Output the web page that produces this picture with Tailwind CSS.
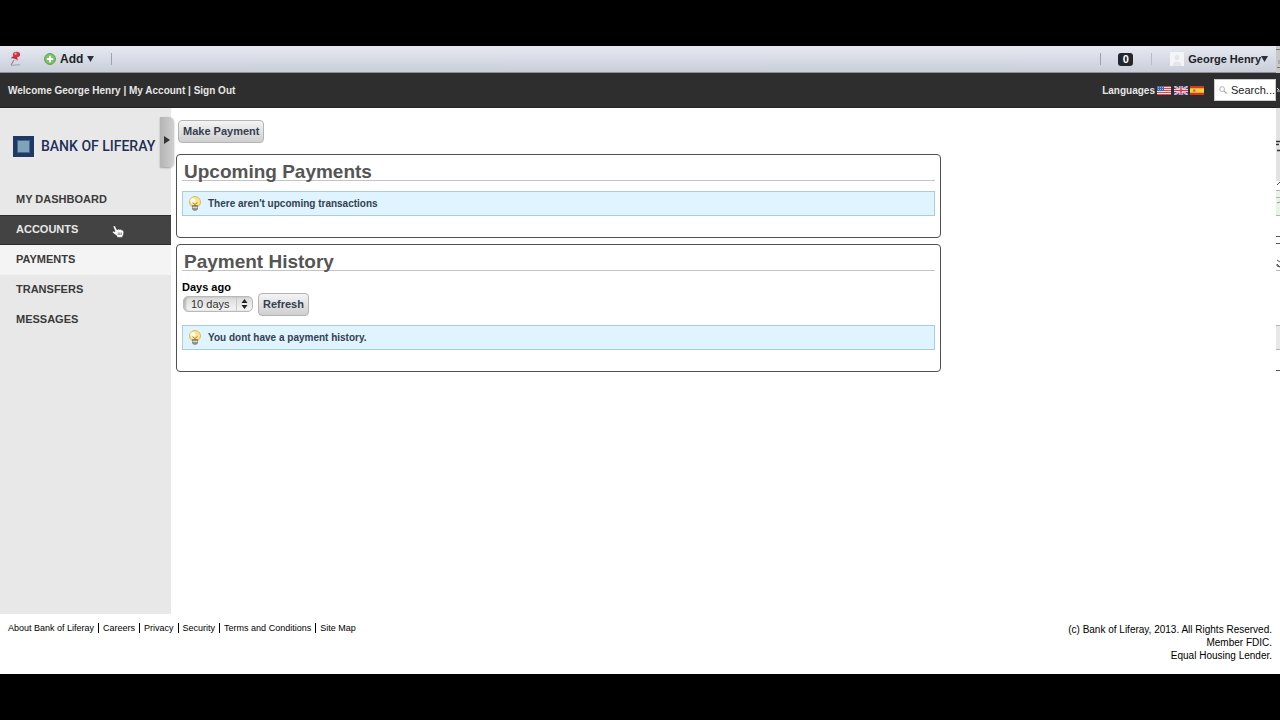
<!DOCTYPE html>
<html lang="en">
<head>
    <meta charset="UTF-8">
    <meta name="viewport" content="width=device-width, initial-scale=1.0">
    <title>Bank of Liferay - Payments</title>
    <script src="https://cdn.jsdelivr.net/npm/@tailwindcss/browser@4"></script>
</head>
<body class="bg-black min-h-screen flex flex-col py-[46px] font-['Liberation_Sans',Arial,sans-serif] text-[11px] text-black">
    <!-- Shared bulb icon for the info messages -->
    <svg class="hidden">
        <symbol id="bulb" viewBox="0 0 14 15">
            <circle cx="7" cy="6" r="5.500" fill="#fbe38c" stroke="#d6b35c" stroke-width=".9"/>
            <circle cx="5" cy="4.500" r="2.500" fill="#fffbe6"/>
            <path d="M4.500 6.500L7 8.500l2.500-2M7 8.500V11" fill="none" stroke="#b8841c" stroke-width="1"/>
            <path d="M4.500 9.500h5V13l-1 1.200h-3l-1-1.200z" fill="#9a9a90" stroke="#5e5e58" stroke-width=".6"/>
            <path d="M4.500 11.500h5" stroke="#e4e4dc" stroke-width=".8"/>
        </symbol>
    </svg>

    <div class="relative flex-1 flex flex-col bg-white overflow-hidden">
        <!-- Dockbar -->
        <header class="h-[27px] flex items-center justify-between pl-2 pr-3 bg-linear-to-b from-[#e6e9f1] to-[#c9ced9] border-b border-[#8b8f98] text-[11px] font-bold text-[#1c1f26]">
            <div class="flex items-center">
                <button type="button" aria-label="Pin the dockbar" class="w-4 h-4">
                    <svg viewBox="0 0 16 16" class="w-4 h-4">
                        <path d="M3 14.500l9-1" stroke="#9a9ca4" stroke-width="1.500" opacity=".6"/>
                        <path d="M6 9l-3 5" stroke="#8a8d96" stroke-width="1.200"/>
                        <path d="M3 7.500c1.500-.8 5 .2 6.500 2 .4-.8.200-1.800-.6-2.500L10.500 5 6 3 5 5.500C4 5.700 3.200 6.400 3 7.500z" fill="#c4303f"/>
                        <ellipse cx="8.500" cy="3.500" rx="3.600" ry="2.800" fill="#cf3345"/>
                        <circle cx="7.500" cy="2.800" r="1.200" fill="#f59aa3"/>
                    </svg>
                </button>
                <button type="button" class="flex items-center ml-5 text-[12px]">
                    <svg viewBox="0 0 12 12" class="w-3 h-3 mr-1">
                        <circle cx="6" cy="6" r="5.400" fill="#7cc464" stroke="#5c9a4a" stroke-width="1"/>
                        <path d="M6 2.800v6.400M2.800 6h6.400" stroke="#fff" stroke-width="2"/>
                    </svg>
                    Add
                    <svg viewBox="0 0 8 7" class="w-[7px] h-1.5 ml-1"><path d="M0 0h8L4 7z" fill="#2c303a"/></svg>
                </button>
                <span class="ml-[17px] w-px h-3 bg-[#9ca1ae]"></span>
            </div>
            <div class="flex items-center">
                <span class="w-px h-3 bg-[#9ca1ae]"></span>
                <button type="button" class="ml-[17px] w-[15px] h-[13px] rounded-[3px] bg-[#23262e] text-white text-[11px] leading-[13px]">0</button>
                <span class="ml-[18px] w-px h-3 bg-[#b8bcc8]"></span>
                <button type="button" class="ml-[18px] flex items-center">
                    <svg viewBox="0 0 14 14" class="w-[14px] h-[14px] mr-1">
                        <path d="M0 0h14v14H0z" fill="#f4f5f7"/>
                        <circle cx="7" cy="5.500" r="2.500" fill="#e4e6ea"/>
                        <path d="M2.500 14c0-6 9-6 9 0z" fill="#e4e6ea"/>
                    </svg>
                    George Henry
                    <svg viewBox="0 0 7 6" class="w-[7px] h-1.5"><path d="M0 0h7L3.500 6z" fill="#2c303a"/></svg>
                </button>
            </div>
        </header>

        <!-- Welcome bar -->
        <div class="h-[35px] flex items-center justify-between pl-2 pr-1 bg-[#2e2e2e] border-b border-[#222] text-[10px] text-[#e6e6e6] font-bold">
            <p>Welcome George Henry | <a href="#">My Account</a> | <a href="#">Sign Out</a></p>
            <div class="flex items-center">
                <span class="mr-0.5">Languages</span>
                <a href="#" aria-label="English (United States)" class="mr-[3px]">
                    <svg viewBox="0 0 14 9" class="w-[14px] h-[9px]">
                        <path d="M0 0h14v9H0z" fill="#f3dfe0"/>
                        <path d="M0 .5h14M0 2.500h14M0 4.500h14M0 6.500h14M0 8.500h14" stroke="#cf4a50" stroke-width="1"/>
                        <path d="M0 0h7v5H0z" fill="#4668ac"/>
                        <path d="M1 1.500h5M1 3.500h5" stroke="#c7d3ea" stroke-width=".7" stroke-dasharray="1 1"/>
                    </svg>
                </a>
                <a href="#" aria-label="English (United Kingdom)" class="mr-0.5">
                    <svg viewBox="0 0 14 9" class="w-[14px] h-[9px]">
                        <path d="M0 0h14v9H0z" fill="#3a4f98"/>
                        <path d="M0 0l14 9M14 0L0 9" stroke="#f0e6ee" stroke-width="1.800"/>
                        <path d="M0 0l14 9M14 0L0 9" stroke="#cf5060" stroke-width=".6"/>
                        <path d="M7 0v9M0 4.500h14" stroke="#fff" stroke-width="3"/>
                        <path d="M7 0v9M0 4.500h14" stroke="#cc3344" stroke-width="1.400"/>
                    </svg>
                </a>
                <a href="#" aria-label="Spanish">
                    <svg viewBox="0 0 14 9" class="w-[14px] h-[9px]">
                        <path d="M0 0h14v9H0z" fill="#f6cf32"/>
                        <path d="M0 0h14v2.300H0zM0 6.700h14V9H0z" fill="#d8352b"/>
                        <path d="M3 3.500h2.500v2.200H3z" fill="#b87430"/>
                    </svg>
                </a>
                <label class="ml-[10px] flex items-center w-[62px] h-[22px] pl-1 bg-white border border-[#ccc]">
                    <svg viewBox="0 0 9 9" class="w-2 h-2 shrink-0 mr-1" fill="none" stroke="#a8a8a8">
                        <circle cx="3.500" cy="3.500" r="2.700"/>
                        <path d="M5.500 5.500l3 3" stroke-width="1.400"/>
                    </svg>
                    <input type="text" aria-label="Search" value="Search..." class="w-full min-w-0 font-normal text-[11px] text-[#222] outline-none">
                </label>
            </div>
        </div>

        <div class="flex-1 flex">
            <!-- Sidebar -->
            <aside class="relative w-[171px] shrink-0 bg-[#e8e8e8]">
                <a href="#" class="h-[77px] flex items-center pl-[13px] font-[Roboto,'Liberation_Sans',sans-serif] text-[14px] font-medium text-[#1f2f57] whitespace-nowrap">
                    <svg viewBox="0 0 21 21" class="w-[21px] h-[21px] mr-[7px]">
                        <path d="M0 0h21v21H0z" fill="#1f3864"/>
                        <path d="M4.500 4.500h12v12h-12z" fill="#7fa3ba" stroke="#456888"/>
                    </svg>
                    BANK OF LIFERAY
                </a>
                <nav class="font-bold text-[#3a3a3a]">
                    <a href="#" class="flex items-center h-[30px] pl-4 pb-0.5">MY DASHBOARD</a>
                    <a href="#" class="relative flex items-center h-[30px] pl-4 pb-0.5 bg-[#434343] border-y border-[#2c2c2c] text-[#e8e8e8]">
                        ACCOUNTS
                        <!-- Hand pointer -->
                        <svg viewBox="0 0 12 13" class="absolute left-[112px] top-[9px] w-3 h-[13px]">
                            <path d="M1 1.200c.8-1 1.900-.5 2.400.3L5 4.800l1.200-.8 1.300.6 1.300-.4 1.100.9 1.300.2.600 1.600-.3 3-.9 1.200v1.300H5v-1.200L2.300 9 .3 7.200l.8-1.300 2 .8z" fill="#fff" stroke="#222" stroke-width=".5"/>
                            <path d="M6.200 7.500v2.500M7.800 7.500v2.500M9.300 7.500v2.500" stroke="#333" stroke-width=".6"/>
                        </svg>
                    </a>
                    <a href="#" class="flex items-center h-[30px] pl-4 pb-0.5 bg-[#f4f4f4]">PAYMENTS</a>
                    <a href="#" class="flex items-center h-[30px] pl-4 pb-0.5">TRANSFERS</a>
                    <a href="#" class="flex items-center h-[30px] pl-4 pb-0.5">MESSAGES</a>
                </nav>
                <button type="button" aria-label="Toggle panel" class="absolute left-[160px] top-[9px] w-[14px] h-[50px] pb-1 flex items-center justify-center rounded-r-[5px] bg-linear-to-r from-[#b4b4b4] to-[#d0d0d0] shadow-[0_1px_2px_rgba(0,0,0,0.3)]">
                    <svg viewBox="0 0 6 8" class="w-1.5 h-2"><path d="M0 0l6 4-6 4z" fill="#333"/></svg>
                </button>
            </aside>

            <!-- Content -->
            <main class="flex-1 pl-[5px] pt-3">
                <button type="button" class="block ml-0.5 h-[23px] px-1 rounded-[4px] border border-[#b4b4b4] bg-linear-to-b from-[#f4f4f4] to-[#cfcfcf] font-bold text-[#34404f]">Make Payment</button>

                <section class="mt-[11px] w-[69.3%] h-[84px] px-[5px] rounded-[4px] border border-[#505050]">
                    <h2 class="h-[26px] pt-1.5 pl-0.5 border-b border-[#c4c4c4] text-[19px] leading-[22px] font-bold text-[#555]">Upcoming Payments</h2>
                    <p class="mt-[10px] h-[25px] flex items-center pl-[5px] bg-[#dff4ff] border border-[#a7cedf] text-[10px] font-bold text-[#34404f]">
                        <svg class="w-[14px] h-[15px] mr-1.5"><use href="#bulb"/></svg>
                        There aren't upcoming transactions
                    </p>
                </section>

                <section class="mt-1.5 w-[69.3%] h-[128px] px-[5px] rounded-[4px] border border-[#505050]">
                    <h2 class="h-[26px] pt-1.5 pl-0.5 border-b border-[#c4c4c4] text-[19px] leading-[22px] font-bold text-[#555]">Payment History</h2>
                    <label for="days" class="block mt-[9px] leading-[14px] font-bold">Days ago</label>
                    <div class="flex items-center h-5 pl-px">
                        <div class="relative">
                            <select id="days" class="block appearance-none w-[70px] h-4 pl-[7px] rounded-[5px] border border-[#b9b9b9] bg-linear-to-b from-[#d9d9d9] to-[#f6f6f6] text-[11px] leading-[14px] text-[#333] shadow-[inset_2px_0_2px_rgba(0,0,0,0.2)]">
                                <option>10 days</option>
                                <option>30 days</option>
                                <option>60 days</option>
                            </select>
                            <svg viewBox="0 0 16 14" class="absolute right-px top-px w-4 h-[14px] pointer-events-none">
                                <path d="M.5 0v14" stroke="#c8c8c8"/>
                                <path d="M5.500 6l3-4 3 4zM5.500 8l3 4 3-4z" fill="#222"/>
                            </svg>
                        </div>
                        <button type="button" class="ml-[5px] h-[23px] px-1 rounded-[4px] border border-[#b4b4b4] bg-linear-to-b from-[#f4f4f4] to-[#cfcfcf] font-bold text-[#34404f]">Refresh</button>
                    </div>
                    <p class="mt-[11px] h-[25px] flex items-center pl-[5px] bg-[#dff4ff] border border-[#a7cedf] text-[10px] font-bold text-[#34404f]">
                        <svg class="w-[14px] h-[15px] mr-1.5"><use href="#bulb"/></svg>
                        You dont have a payment history.
                    </p>
                </section>
            </main>
        </div>

        <footer class="h-[60px] flex justify-between px-2 pt-[9px]">
            <nav class="flex items-center h-[10px] text-[9px] divide-x divide-black leading-[10px]">
                <a href="#" class="pr-1">About Bank of Liferay</a>
                <a href="#" class="px-1">Careers</a>
                <a href="#" class="px-1">Privacy</a>
                <a href="#" class="px-1">Security</a>
                <a href="#" class="px-1">Terms and Conditions</a>
                <a href="#" class="pl-1">Site Map</a>
            </nav>
            <p class="text-right text-[10px] leading-[13px]">(c) Bank of Liferay, 2013. All Rights Reserved.<br>Member FDIC.<br>Equal Housing Lender.</p>
        </footer>

        <!-- Edge of the window behind -->
        <svg viewBox="0 0 4 628" class="absolute right-0 top-0 w-1 h-[628px]" fill="none">
            <path d="M0 0h4v27H0z" fill="#c8c8c8"/>
            <path d="M0 3.500h4M1 21.500h3" stroke="#777"/>
            <path d="M2 14h2v4H2z" fill="#aaa"/>
            <path d="M0 27h4v35H0z" fill="#2e2e2e"/>
            <path d="M1 42l2 2M1 45h3" stroke="#ddd"/>
            <path d="M0 62h4v73H0z" fill="#e2e2e2"/>
            <path d="M0 95.500h4M0 98.500h3M1 104.500h3" stroke="#333" stroke-width="1.500"/>
            <path d="M1 139l3-3M1 214l3 2M1 218l3 3-3-1z" stroke="#555"/>
            <path d="M0 144h4v25H0z" fill="#eaf3ea"/>
            <path d="M0 144.500h4M0 151.500h4M0 169.500h4M0 224.500h4M0 279.500h4M0 303.500h4" stroke="#b4b4b4"/>
            <path d="M1 157l3-1" stroke="#7fae6c"/>
            <path d="M0 280h4v23H0z" fill="#e8e8e8"/>
            <path d="M0 190.500h4M0 197.500h4M0 324.500h4" stroke="#555" stroke-width="1.200"/>
        </svg>
    </div>
</body>
</html>
